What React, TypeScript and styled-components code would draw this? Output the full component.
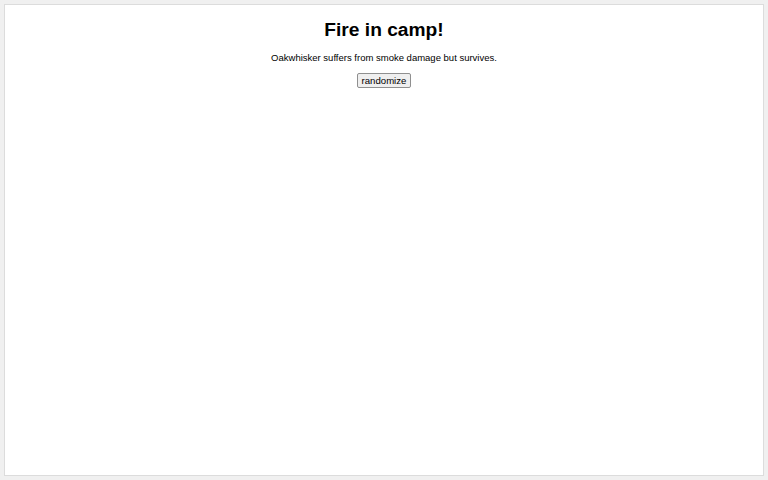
import styled, { createGlobalStyle } from "styled-components";

const GlobalStyle = createGlobalStyle`
    html, body {
        margin: 0;
        padding: 0;
        height: 100%;
        background: #f0f0f0;
        font-family: "Liberation Sans", Arial, sans-serif;
    }
    #root {
        height: 100%;
    }
`;

const Page = styled.div`
    box-sizing: border-box;
    height: 100%;
    padding: 4px;
`;

const Card = styled.div`
    box-sizing: border-box;
    height: 100%;
    background: #ffffff;
    border: 1px solid #dcdcdc;
    display: flex;
    flex-direction: column;
    align-items: center;
    padding-top: 14px;
`;

const Title = styled.h1`
    margin: 0;
    font-size: 19.2px;
    font-weight: bold;
    color: #000;
`;

const Message = styled.p`
    margin: 11px 0 0;
    font-size: 9.5px;
    color: #000;
`;

const Button = styled.button`
    margin-top: 10px;
    font-family: "Liberation Sans", Arial, sans-serif;
    font-size: 9.6px;
    color: #000;
    background: #efefef;
    border: 1px solid #8f8f8f;
    border-radius: 2px;
    padding: 1px 4px;
    line-height: 11px;
`;

export default function App() {
    return (
        <>
            <GlobalStyle />
            <Page>
                <Card>
                    <Title>Fire in camp!</Title>
                    <Message>Oakwhisker suffers from smoke damage but survives.</Message>
                    <Button type="button">randomize</Button>
                </Card>
            </Page>
        </>
    );
}
